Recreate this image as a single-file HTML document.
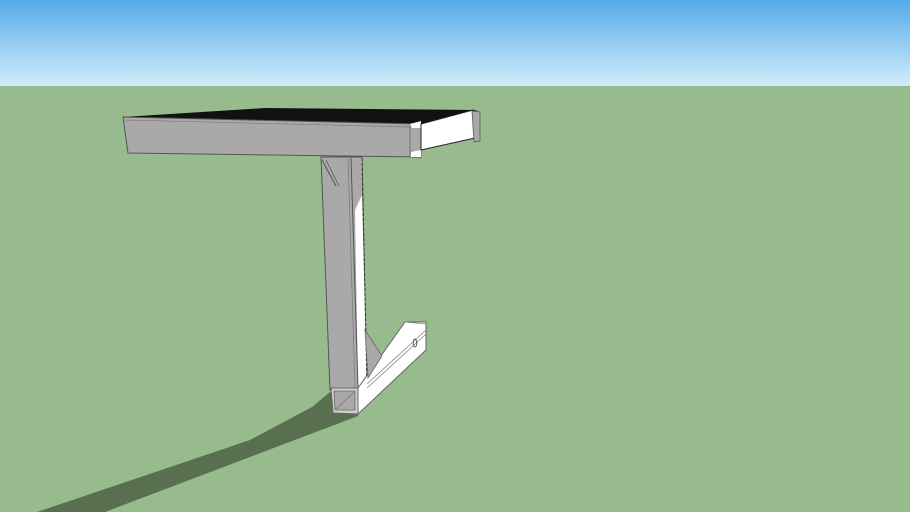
<!DOCTYPE html>
<html><head><meta charset="utf-8"><style>
html,body{margin:0;padding:0;width:910px;height:512px;overflow:hidden;}
svg{display:block}
</style></head><body>
<svg width="910" height="512" viewBox="0 0 910 512" xmlns="http://www.w3.org/2000/svg">
<defs>
<linearGradient id="sky" x1="0" y1="0" x2="0" y2="1">
<stop offset="0" stop-color="#55abe7"/>
<stop offset="1" stop-color="#d4edfb"/>
</linearGradient>
</defs>
<rect x="0" y="0" width="910" height="87" fill="url(#sky)"/>
<rect x="0" y="86" width="910" height="426" fill="#98bb8e"/>
<!-- shadow -->
<path d="M37 512 L250 440 L312 407 L330 392 L358 400 L358 416 L105 512 Z" fill="#586f50"/>
<!-- post -->
<path d="M321 157 L362 157 L367 390 L330 390 Z" fill="#a9a9a9" stroke="#555" stroke-width="1"/>
<path d="M351 160 L362 160 L362 195 L355 210 Z" fill="#a9a9a9"/>
<path d="M355 210 L362 195 L367 388 L358 388 Z" fill="#ffffff"/>
<line x1="351" y1="158" x2="358" y2="388" stroke="#555" stroke-width="1"/>
<line x1="348" y1="158" x2="355" y2="388" stroke="#777" stroke-width="0.7"/>
<line x1="362" y1="158" x2="367" y2="388" stroke="#333" stroke-width="1" stroke-dasharray="3,2"/>
<line x1="322" y1="160" x2="336" y2="186" stroke="#555" stroke-width="1"/>
<line x1="326" y1="160" x2="339" y2="186" stroke="#555" stroke-width="0.8"/>
<!-- arm -->
<path d="M358 388 L405 322 L426 322 L426 350 L358 414 Z" fill="#ffffff" stroke="#666" stroke-width="1"/>
<line x1="367" y1="384" x2="426" y2="330" stroke="#888" stroke-width="0.8"/>
<line x1="367" y1="388" x2="426" y2="334" stroke="#888" stroke-width="0.8"/>
<line x1="405" y1="322" x2="426" y2="324" stroke="#888" stroke-width="0.8"/>
<ellipse cx="415" cy="343" rx="1.8" ry="4" fill="none" stroke="#555" stroke-width="1"/>
<!-- brace -->
<path d="M365 330 L382 356 L368 378 Z" fill="#a9a9a9" stroke="#666" stroke-width="0.8"/>
<!-- post end -->
<path d="M331 388 L358 388 L358 414 L333 413 Z" fill="#cfcfcf" stroke="#666" stroke-width="1"/>
<path d="M334 391 L355 391 L355 410 L335 410 Z" fill="#a9a9a9" stroke="#666" stroke-width="0.8"/>
<line x1="336" y1="409" x2="354" y2="392" stroke="#777" stroke-width="0.8"/>
<!-- beam top -->
<path d="M123 117 L265 108 L478 110 L420 124 Z" fill="#111"/>
<!-- beam front -->
<path d="M123 117 L420 124 L421 157 L128 153 Z" fill="#a9a9a9" stroke="#555" stroke-width="1"/>
<line x1="125" y1="120" x2="410" y2="127" stroke="#777" stroke-width="0.7"/>
<!-- end cap -->
<path d="M410 124 L421 124 L421 158 L410 157 Z" fill="#a9a9a9" stroke="#666" stroke-width="0.8"/>
<path d="M410 124 L421 121 L421 128 L412 128 Z" fill="#fff"/>
<path d="M411 152 L421 150 L421 157 L411 157 Z" fill="#fff"/>
<path d="M421 124 L473 110 L475 138 L421 150 Z" fill="#ffffff" stroke="#222" stroke-width="1"/>
<path d="M472 111 L480 112 L480 141 L474 142 Z" fill="#a9a9a9" stroke="#555" stroke-width="0.8"/>
</svg>
</body></html>
